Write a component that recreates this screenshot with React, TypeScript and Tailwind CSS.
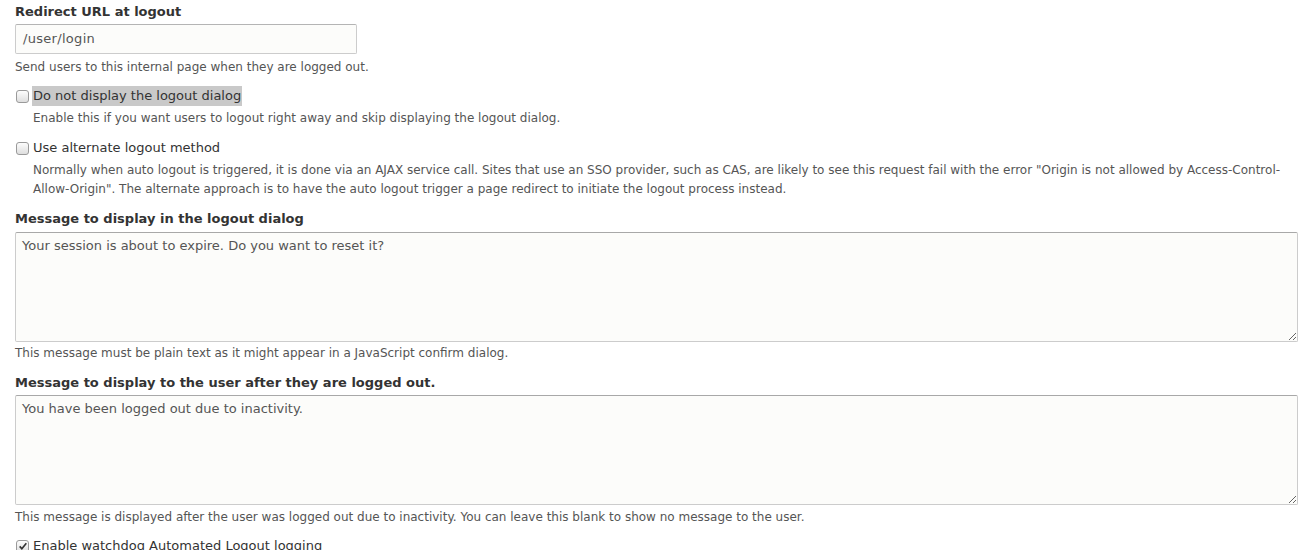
import React from "react";

const font = { fontFamily: '"DejaVu Sans", Verdana, sans-serif' };

const Label: React.FC<{ children: React.ReactNode; className?: string }> = ({ children, className }) => (
  <div className={`text-[13px] font-bold leading-[18px] text-[#333] whitespace-nowrap ${className ?? ""}`}>{children}</div>
);

const Desc: React.FC<{ children: React.ReactNode; className?: string }> = ({ children, className }) => (
  <div className={`text-[12px] leading-[18px] text-[#555] whitespace-nowrap ${className ?? ""}`}>{children}</div>
);

const Box: React.FC<{ checked?: boolean }> = ({ checked }) => (
  <span className="relative flex h-[13px] w-[13px] shrink-0 items-center justify-center rounded-[3px] border border-[#9a9a9a] bg-gradient-to-b from-[#fdfdfd] to-[#dedede]">
    {checked && (
      <svg viewBox="0 0 12 12" className="h-[10px] w-[10px]">
        <path d="M2 6.5 L4.6 9.2 L10 2.6" fill="none" stroke="#333" strokeWidth="2" />
      </svg>
    )}
  </span>
);

const Check: React.FC<{ label: string; checked?: boolean; highlight?: boolean; className?: string }> = ({
  label,
  checked,
  highlight,
  className,
}) => (
  <div className={`flex h-[20px] items-center pl-[1px] ${className ?? ""}`}>
    <Box checked={checked} />
    <span
      className={`ml-[3px] pl-[1px] pr-[1px] text-[13px] leading-[20px] text-[#333] whitespace-nowrap ${
        highlight ? "bg-[#c9c9c9]" : ""
      }`}
    >
      {label}
    </span>
  </div>
);

export default function App() {
  return (
    <div className="min-h-[550px] w-[1315px] overflow-hidden bg-white pl-[15px] pr-[17px] pt-[3px]" style={font}>
      <Label>Redirect URL at logout</Label>
      <div className="mt-[3px] flex h-[30px] w-[342px] items-center rounded-[2px] border border-[#ccc] border-t-[#b4b4b4] bg-[#fcfcfa] px-[7px] text-[13px] tracking-[0.3px] text-[#555]">
        /user/login
      </div>
      <Desc className="mt-[4px]">Send users to this internal page when they are logged out.</Desc>

      <Check className="mt-[10px]" label="Do not display the logout dialog" highlight />
      <Desc className="mt-[3px] pl-[18px]">Enable this if you want users to logout right away and skip displaying the logout dialog.</Desc>

      <Check className="mt-[11px]" label="Use alternate logout method" />
      <div className="mt-[3px] pl-[18px]">
        <Desc className="leading-[19px]">
          Normally when auto logout is triggered, it is done via an AJAX service call. Sites that use an SSO provider, such as CAS, are likely to see this request fail with the error "Origin is not allowed by Access-Control-
        </Desc>
        <Desc className="leading-[19px]">
          Allow-Origin". The alternate approach is to have the auto logout trigger a page redirect to initiate the logout process instead.
        </Desc>
      </div>

      <Label className="mt-[11px]">Message to display in the logout dialog</Label>
      <textarea
        readOnly
        defaultValue="Your session is about to expire. Do you want to reset it?"
        className="mt-[4px] block h-[110px] w-full rounded-[2px] border border-[#ccc] border-t-[#a8a8a8] bg-[#fcfcfa] px-[6px] py-[4px] text-[13px] leading-[18px] text-[#555] outline-none"
        style={font}
      />
      <Desc className="mt-[2px]">This message must be plain text as it might appear in a JavaScript confirm dialog.</Desc>

      <Label className="mt-[12px]">Message to display to the user after they are logged out.</Label>
      <textarea
        readOnly
        defaultValue="You have been logged out due to inactivity."
        className="mt-[3px] block h-[110px] w-full rounded-[2px] border border-[#ccc] border-t-[#a8a8a8] bg-[#fcfcfa] px-[6px] py-[4px] text-[13px] leading-[18px] text-[#555] outline-none"
        style={font}
      />
      <Desc className="mt-[3px]">This message is displayed after the user was logged out due to inactivity. You can leave this blank to show no message to the user.</Desc>

      <Check className="mt-[10px]" label="Enable watchdog Automated Logout logging" checked />
    </div>
  );
}
